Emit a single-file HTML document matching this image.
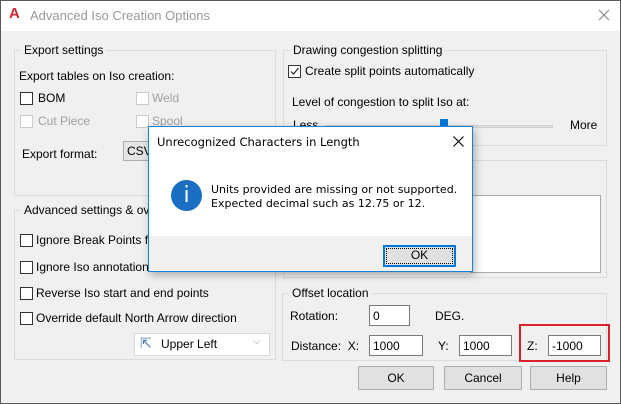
<!DOCTYPE html>
<html><head><style>
*{margin:0;padding:0;box-sizing:border-box}
body{width:621px;height:404px;background:#f0f0f0;font-family:"Liberation Sans",sans-serif;font-size:12px;color:#000;position:relative;overflow:hidden}
.a{position:absolute;white-space:nowrap}
.win{position:absolute;left:0;top:0;width:621px;height:404px;border:1px solid #5a5a5a}
.grp{position:absolute;border:1px solid #dcdcdc}
.gt{position:absolute;background:#f0f0f0;padding:0 3px;top:-8px;left:6px}
.cb{position:absolute;width:13px;height:13px;border:1px solid #333;background:#fff}
.cb.d{border-color:#ccc}
.in{position:absolute;background:#fff;border:1px solid #7a7a7a;padding:3px 3px;font-size:12px}
.btn{position:absolute;background:#e1e1e1;border:1px solid #adadad;text-align:center;line-height:22px}
.dis{color:#a0a0a0}
</style></head><body>
<div class="win"></div>
<div class="a" style="left:1px;top:1px;width:619px;height:30px;background:#fff"></div>
<div class="a" style="left:9px;top:5px;color:#d4282e;font-weight:bold;font-size:15px">A</div>
<div class="a" style="left:30px;top:8px;color:#999;font-size:13px">Advanced Iso Creation Options</div>
<svg class="a" style="left:598px;top:9px" width="12" height="12"><path d="M1 1L11 11M11 1L1 11" stroke="#888" stroke-width="1.2"/></svg>

<div class="grp" style="left:14px;top:50px;width:262px;height:146px"><span class="gt">Export settings</span></div>
<div class="a" style="left:19px;top:69px">Export tables on Iso creation:</div>
<div class="cb" style="left:20px;top:92px"></div><div class="a" style="left:38px;top:91px">BOM</div>
<div class="cb d" style="left:136px;top:92px"></div><div class="a dis" style="left:152px;top:91px">Weld</div>
<div class="cb d" style="left:20px;top:115px"></div><div class="a dis" style="left:38px;top:114px">Cut Piece</div>
<div class="cb d" style="left:136px;top:115px"></div><div class="a dis" style="left:152px;top:114px">Spool</div>
<div class="a" style="left:22px;top:147px">Export format:</div>
<div class="a" style="left:123px;top:141px;width:40px;height:20px;background:#e5e5e5;border:1px solid #adadad;padding:2px 3px">CSV</div>

<div class="grp" style="left:283px;top:50px;width:324px;height:96px"><span class="gt">Drawing congestion splitting</span></div>
<div class="cb" style="left:288px;top:65px"><svg width="11" height="11" style="position:absolute;left:0;top:0"><path d="M2 5.5L4.5 8L9.5 2" stroke="#222" stroke-width="1.2" fill="none"/></svg></div>
<div class="a" style="left:305px;top:64px">Create split points automatically</div>
<div class="a" style="left:292px;top:95px">Level of congestion to split Iso at:</div>
<div class="a" style="left:293px;top:118px">Less</div>
<div class="a" style="left:325px;top:125px;width:228px;height:3px;background:#e0e0e0;border:1px solid #d0d0d0"></div>
<div class="a" style="left:440px;top:119px;width:8px;height:12px;background:#0078d7"></div>
<div class="a" style="left:570px;top:118px">More</div>

<div class="grp" style="left:283px;top:160px;width:324px;height:118px"></div>
<div class="a" style="left:470px;top:195px;width:131px;height:78px;background:#fff;border:1px solid #aaa"></div>

<div class="grp" style="left:14px;top:210px;width:262px;height:150px"><span class="gt">Advanced settings &amp; overrides</span></div>
<div class="cb" style="left:20px;top:234px"></div><div class="a" style="left:36px;top:233px">Ignore Break Points from</div>
<div class="cb" style="left:20px;top:261px"></div><div class="a" style="left:36px;top:260px">Ignore Iso annotations</div>
<div class="cb" style="left:20px;top:287px"></div><div class="a" style="left:36px;top:286px">Reverse Iso start and end points</div>
<div class="cb" style="left:20px;top:312px"></div><div class="a" style="left:36px;top:311px">Override default North Arrow direction</div>
<div class="a" style="left:134px;top:333px;width:136px;height:23px;background:#fff;border:1px solid #d9d9d9"></div>
<div class="a" style="left:140px;top:335px;color:#4a7ab8;font-size:14px">⇱</div>
<div class="a" style="left:161px;top:337px">Upper Left</div>
<div class="a" style="left:253px;top:336px;color:#999;font-size:10px">⌵</div>

<div class="grp" style="left:282px;top:293px;width:325px;height:68px"><span class="gt">Offset location</span></div>
<div class="a" style="left:290px;top:309px">Rotation:</div>
<div class="in" style="left:369px;top:305px;width:41px;height:21px">0</div>
<div class="a" style="left:435px;top:309px">DEG.</div>
<div class="a" style="left:291px;top:339px">Distance:&nbsp;&nbsp;X:</div>
<div class="in" style="left:369px;top:335px;width:54px;height:21px">1000</div>
<div class="a" style="left:438px;top:339px">Y:</div>
<div class="in" style="left:459px;top:335px;width:53px;height:21px">1000</div>
<div class="a" style="left:519px;top:324px;width:91px;height:38px;border:2px solid #d9232a"></div>
<div class="a" style="left:527px;top:339px">Z:</div>
<div class="in" style="left:548px;top:335px;width:53px;height:21px">-1000</div>
<div class="btn" style="left:358px;top:366px;width:76px;height:24px">OK</div>
<div class="btn" style="left:444px;top:366px;width:78px;height:24px">Cancel</div>
<div class="btn" style="left:530px;top:366px;width:77px;height:24px">Help</div>

<div class="a" style="left:148px;top:126px;width:325px;height:146px;background:#f0f0f0;border:1px solid #1883d7;box-shadow:2px 3px 8px rgba(0,0,0,.3)">
<div class="a" style="left:0;top:0;width:323px;height:109px;background:#fff"></div>
<div class="a" style="left:8px;top:8px;font-family:'DejaVu Sans',sans-serif;font-size:11.5px">Unrecognized Characters in Length</div>
<svg class="a" style="left:304px;top:9px" width="11" height="11"><path d="M0.5 0.5L10.5 10.5M10.5 0.5L0.5 10.5" stroke="#000" stroke-width="1.1"/></svg>
<div class="a" style="left:22px;top:53px;width:31px;height:31px;border-radius:50%;background:#1a6fc2;color:#fff;text-align:center;font-size:22px;line-height:31px;font-family:'DejaVu Sans',sans-serif">i</div>
<div class="a" style="left:62px;top:56px;font-family:'DejaVu Sans',sans-serif;font-size:11px;line-height:14px">Units provided are missing or not supported.<br>Expected decimal such as 12.75 or 12.</div>
<div class="a" style="left:234px;top:118px;width:73px;height:22px;background:#e1e1e1;border:2px solid #0078d7;text-align:center;line-height:17px;outline:1px dotted #000;outline-offset:-4px">OK</div>
</div>
</body></html>
